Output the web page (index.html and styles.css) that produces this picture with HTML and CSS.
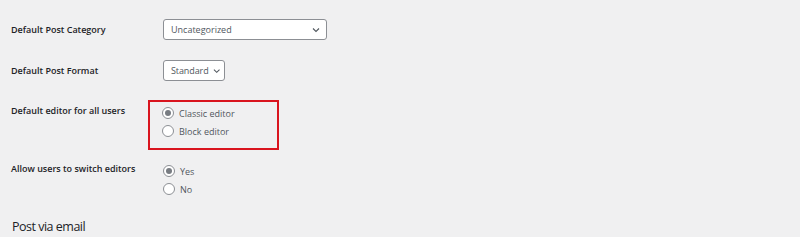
FILE: index.html
```html
<!DOCTYPE html>
<html>
  <head>
    <meta name="viewport" content="width=device-width, initial-scale=1.0">
    <link rel="stylesheet" href="styles.css">
  </head>
  <body>
    <div class="settings">
      <div class="form-row">
        <div class="row-label">Default Post Category</div>
        <div class="select-box wide">
          <span>Uncategorized</span>
          <svg class="chevron" width="8" height="6" viewBox="0 0 8 6"><polyline points="1,1.5 4,4.5 7,1.5" fill="none" stroke="#50575e" stroke-width="1.1"/></svg>
        </div>
      </div>
      <div class="form-row format-row">
        <div class="row-label">Default Post Format</div>
        <div class="select-box narrow">
          <span>Standard</span>
          <svg class="chevron" width="8" height="6" viewBox="0 0 8 6"><polyline points="1,1.5 4,4.5 7,1.5" fill="none" stroke="#50575e" stroke-width="1.1"/></svg>
        </div>
      </div>
      <div class="form-row top-row">
        <div class="row-label boxed-label">Default editor for all users</div>
        <div class="highlight">
          <label class="radio-line"><span class="radio checked"></span>Classic editor</label>
          <label class="radio-line"><span class="radio"></span>Block editor</label>
        </div>
      </div>
      <div class="form-row top-row switch-row">
        <div class="row-label">Allow users to switch editors</div>
        <div class="radio-group">
          <label class="radio-line"><span class="radio checked"></span>Yes</label>
          <label class="radio-line"><span class="radio"></span>No</label>
        </div>
      </div>
      <h2 class="section-title">Post via email</h2>
    </div>
  </body>
</html>
```

FILE: styles.css
```css
body {
  margin: 0;
  background-color: #f0f0f1;
  color: #1d2327;
  font-family: "Open Sans", "Noto Sans", sans-serif;
}
.settings {
  padding: 19px 0 0 11px;
}
.form-row {
  display: grid;
  grid-template-columns: 152px 1fr;
  align-items: center;
  height: 21px;
  margin-bottom: 20px;
}
.format-row {
  margin-bottom: 19px;
}
.form-row.top-row {
  align-items: start;
  height: auto;
  margin-bottom: 12px;
}
.form-row.switch-row {
  margin-bottom: 0;
}
.row-label {
  font-size: 9px;
  font-weight: 600;
  line-height: 14px;
  color: #1d2327;
}
.boxed-label {
  padding-top: 4px;
}
.select-box {
  display: flex;
  justify-content: space-between;
  align-items: center;
  box-sizing: border-box;
  height: 21px;
  padding: 0 6px 0 7px;
  background-color: #fff;
  border: 1px solid #8c8f94;
  border-radius: 3px;
  font-size: 9px;
  color: #50575e;
}
.select-box.wide {
  width: 164px;
}
.select-box.narrow {
  justify-content: flex-start;
  gap: 4px;
  width: 62px;
  padding-right: 4px;
  letter-spacing: -0.1px;
}
.highlight {
  justify-self: start;
  width: 131px;
  box-sizing: border-box;
  margin-left: -15px;
  padding: 2px 0 8px 12px;
  border: 2px solid #d9141e;
}
.radio-line {
  display: flex;
  align-items: center;
  height: 18px;
  font-size: 9px;
  color: #50575e;
}
.radio {
  position: relative;
  width: 12px;
  height: 12px;
  box-sizing: border-box;
  margin-right: 5px;
  border: 1px solid #8c8f94;
  border-radius: 50%;
  background-color: #fff;
}
.radio.checked::after {
  content: "";
  position: absolute;
  left: 2px;
  top: 2px;
  width: 6px;
  height: 6px;
  border-radius: 50%;
  background-color: #787c82;
}
.section-title {
  margin: 21px 0 0 1px;
  font-size: 12.5px;
  font-weight: 400;
  letter-spacing: -0.5px;
  line-height: 16px;
  color: #1d2327;
}
```
